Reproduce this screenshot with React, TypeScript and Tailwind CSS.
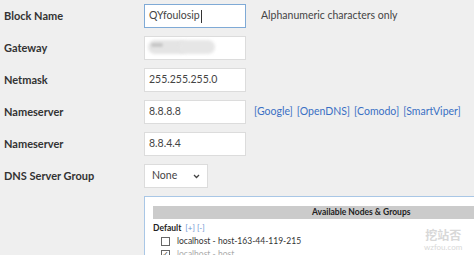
import React from 'react';

const rows = [
  { label: 'Block Name', value: 'QYfoulosip', focus: true, note: 'Alphanumeric characters only' },
  { label: 'Gateway', value: '', blur: true },
  { label: 'Netmask', value: '255.255.255.0' },
  { label: 'Nameserver', value: '8.8.8.8', links: true },
  { label: 'Nameserver', value: '8.8.4.4' },
];

const font = { fontFamily: 'Lato, "Open Sans", Arial, sans-serif' };

const App = () => {
  return (
    <div className="w-[474px] h-[255px] overflow-hidden bg-[#efefef] text-[#333]" style={font}>
      {rows.map((row, i) => (
        <div key={i} className="flex items-center h-[32px]">
          <div className="w-[144px] shrink-0 pl-[4px] text-[11px] font-bold">{row.label}</div>
          <div
            className={`relative shrink-0 w-[102px] h-[24px] bg-white border flex items-center px-[4px] text-[10.5px] text-[#444] ${
              row.focus ? 'border-[#7faad6]' : 'border-[#dcdcdc]'
            }`}
          >
            {row.value}
            {row.focus && <span className="w-px h-[13px] bg-[#333] ml-px" />}
            {row.blur && (
              <>
                <div className="absolute left-[3px] top-[3px] w-[40px] h-[14px] rounded-full bg-[#e4e4e4] blur-[1.5px]" />
                <div className="absolute left-[34px] top-[3px] w-[36px] h-[14px] rounded-full bg-[#e6e6e6] blur-[1.5px]" />
                <div className="absolute left-[6px] top-[6px] w-[12px] h-[4px] rounded-full bg-[#c8c8c8] blur-[1px]" />
              </>
            )}
          </div>
          {row.note && <div className="ml-[15px] text-[10.5px] text-[#444] whitespace-nowrap">{row.note}</div>}
          {row.links && (
            <div className="ml-[8px] text-[10.5px] text-[#3a6fc4] flex gap-[4px] whitespace-nowrap">
              <span>[Google]</span>
              <span>[OpenDNS]</span>
              <span>[Comodo]</span>
              <span>[SmartViper]</span>
            </div>
          )}
        </div>
      ))}
      <div className="flex items-center h-[32px]">
        <div className="w-[144px] shrink-0 pl-[4px] text-[11px] font-bold">DNS Server Group</div>
        <div className="w-[64px] h-[24px] bg-white border border-[#dcdcdc] flex items-center justify-between pl-[7px] pr-[7px] text-[10.5px] text-[#444]">
          <span>None</span>
          <svg width="7" height="5" viewBox="0 0 7 5">
            <path d="M1 1 L3.5 3.5 L6 1" fill="none" stroke="#444" strokeWidth="1.3" />
          </svg>
        </div>
      </div>
      <div className="relative ml-[144px] mt-[4px] w-[440px] h-[70px] bg-white border-t border-l border-[#a9c7e6] pt-[9px] pl-[8px]">
        <div className="h-[13px] bg-[#cbcbcb] flex items-center pl-[159px] text-[8.5px] font-bold text-[#222]">
          Available Nodes &amp; Groups
        </div>
        <div className="mt-[4px] flex items-center gap-[4px] text-[8.5px] leading-[10px]">
          <span className="font-bold text-[#222]">Default</span>
          <span className="text-[#6b8fd0] text-[8px]">[+] [-]</span>
        </div>
        <div className="mt-[2px] ml-[8px] flex items-center gap-[7px] text-[8.5px] leading-[12px] text-[#333]">
          <span className="w-[9px] h-[9px] border border-[#666] bg-white" />
          <span>localhost - host-163-44-119-215</span>
        </div>
        <div className="mt-[1px] ml-[8px] flex items-center gap-[7px] text-[8.5px] leading-[12px] text-[#aaa]">
          <span className="w-[9px] h-[9px] border border-[#666] bg-white text-[8px] leading-[7px] text-[#333]">✓</span>
          <span>localhost - host</span>
        </div>
        <div className="absolute left-[279px] top-[32px] flex flex-col items-center text-[#d8d8d8]">
          <span className="text-[12px] leading-[12px] font-bold" style={{ fontFamily: '"Noto Sans CJK SC", sans-serif' }}>挖站否</span>
          <span className="text-[8px] leading-[9px] mt-[2px]">wzfou.com</span>
        </div>
      </div>
    </div>
  );
};

export default App;
